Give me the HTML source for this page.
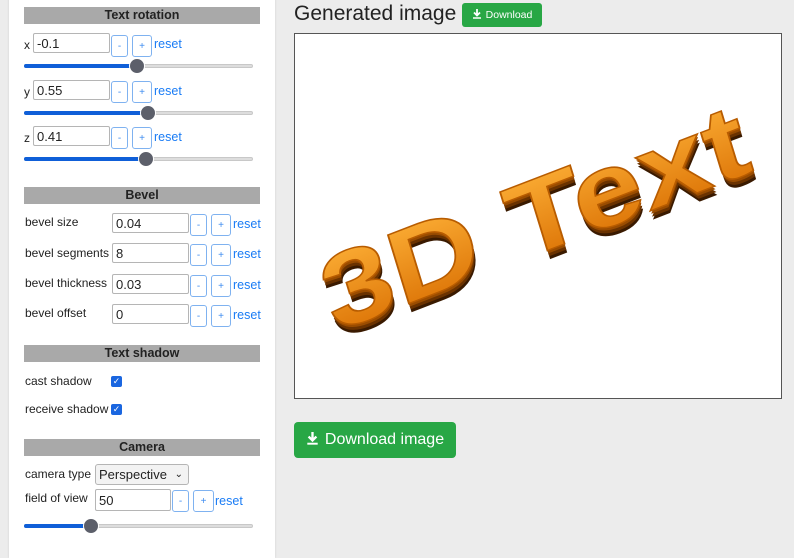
<!DOCTYPE html>
<html><head><style>
body{margin:0;width:794px;height:544px;background:#ececec;font-family:"Liberation Sans",Arial,sans-serif;position:relative;overflow:hidden;color:#222}
.p{position:absolute;left:9px;top:-2px;width:266px;height:560px;background:#fff;box-shadow:0 0 2px #ccc}
.a{position:absolute}
.h{position:absolute;left:24px;width:236px;height:17px;background:#a9a9a9;font-weight:bold;font-size:12.5px;text-align:center;line-height:17px;color:#222}
.in{position:absolute;height:20px;border:1px solid #b5b5b5;border-radius:2px;font-size:13px;line-height:20px;padding-left:3px;box-sizing:border-box;background:#fff}
.b{position:absolute;border:1px solid #7fb2f0;border-radius:3px;color:#3d8bf0;font-size:10px;text-align:center;box-sizing:border-box;height:22px;line-height:22px}
.r{position:absolute;color:#1a7cf5;font-size:12.5px}
.l{position:absolute;font-size:12px}
.tr{position:absolute;left:24px;width:229px;height:4px;background:#ddd;border-radius:2px;border:1px solid #c8c8c8;box-sizing:border-box}
.tf{position:absolute;left:24px;height:4px;background:#0f5fd8;border-radius:2px}
.th{position:absolute;width:16px;height:16px;border-radius:50%;background:#5c5f6a;border:1px solid #fff;box-sizing:border-box}
.cb{position:absolute;width:11px;height:11px;background:#1a66e0;border-radius:2px;color:#fff;font-size:9px;line-height:11px;text-align:center}
</style></head><body>
<div class="p"></div>
<div class="h" style="top:7px">Text rotation</div>

<div class="l" style="left:24px;top:38px">x</div><div class="in" style="left:33px;top:33px;width:77px">-0.1</div>
<div class="b" style="left:111px;top:35px;width:17px">-</div><div class="b" style="left:132px;top:35px;width:20px">+</div><div class="r" style="left:154px;top:37px">reset</div>
<div class="tr" style="top:64px"></div><div class="tf" style="top:64px;width:113px"></div><div class="th" style="left:129px;top:58px"></div>

<div class="l" style="left:24px;top:85px">y</div><div class="in" style="left:33px;top:80px;width:77px">0.55</div>
<div class="b" style="left:111px;top:81px;width:17px">-</div><div class="b" style="left:132px;top:81px;width:20px">+</div><div class="r" style="left:154px;top:84px">reset</div>
<div class="tr" style="top:111px"></div><div class="tf" style="top:111px;width:124px"></div><div class="th" style="left:140px;top:105px"></div>

<div class="l" style="left:24px;top:131px">z</div><div class="in" style="left:33px;top:126px;width:77px">0.41</div>
<div class="b" style="left:111px;top:127px;width:17px">-</div><div class="b" style="left:132px;top:127px;width:20px">+</div><div class="r" style="left:154px;top:130px">reset</div>
<div class="tr" style="top:157px"></div><div class="tf" style="top:157px;width:122px"></div><div class="th" style="left:138px;top:151px"></div>

<div class="h" style="top:187px">Bevel</div>
<div class="l" style="left:25px;top:215px">bevel size</div><div class="in" style="left:112px;top:213px;width:77px">0.04</div>
<div class="b" style="left:190px;top:214px;width:17px">-</div><div class="b" style="left:211px;top:214px;width:20px">+</div><div class="r" style="left:233px;top:217px">reset</div>
<div class="l" style="left:25px;top:246px">bevel segments</div><div class="in" style="left:112px;top:243px;width:77px">8</div>
<div class="b" style="left:190px;top:244px;width:17px">-</div><div class="b" style="left:211px;top:244px;width:20px">+</div><div class="r" style="left:233px;top:247px">reset</div>
<div class="l" style="left:25px;top:276px">bevel thickness</div><div class="in" style="left:112px;top:274px;width:77px">0.03</div>
<div class="b" style="left:190px;top:275px;width:17px">-</div><div class="b" style="left:211px;top:275px;width:20px">+</div><div class="r" style="left:233px;top:278px">reset</div>
<div class="l" style="left:25px;top:306px">bevel offset</div><div class="in" style="left:112px;top:304px;width:77px">0</div>
<div class="b" style="left:190px;top:305px;width:17px">-</div><div class="b" style="left:211px;top:305px;width:20px">+</div><div class="r" style="left:233px;top:308px">reset</div>

<div class="h" style="top:345px">Text shadow</div>
<div class="l" style="left:25px;top:374px">cast shadow</div><div class="cb" style="left:111px;top:376px">✓</div>
<div class="l" style="left:25px;top:402px">receive shadow</div><div class="cb" style="left:111px;top:404px">✓</div>

<div class="h" style="top:439px">Camera</div>
<div class="l" style="left:25px;top:467px">camera type</div>
<div class="in" style="left:95px;top:464px;width:94px;height:21px;background:#f3f3f3;border-radius:3px">Perspective<span style="position:absolute;right:5px;top:0;font-size:10px">⌄</span></div>
<div class="l" style="left:25px;top:491px">field of view</div><div class="in" style="left:95px;top:489px;width:76px;height:22px;line-height:22px">50</div>
<div class="b" style="left:172px;top:490px;width:17px">-</div><div class="b" style="left:193px;top:490px;width:21px">+</div><div class="r" style="left:215px;top:494px">reset</div>
<div class="tr" style="top:524px"></div><div class="tf" style="top:524px;width:67px"></div><div class="th" style="left:83px;top:518px"></div>

<div class="a" style="left:294px;top:2px;font-size:21px;color:#222">Generated image</div>
<div class="a" style="left:462px;top:3px;width:80px;height:24px;background:#28a745;border-radius:3px;color:#fff;font-size:10.5px;line-height:24px;text-align:center"><svg width="10" height="10" viewBox="0 0 10 10" style="vertical-align:-1px;margin-right:4px"><path d="M5 0V6M2 3.5L5 6.5L8 3.5" stroke="#fff" stroke-width="1.8" fill="none"/><path d="M1 9H9" stroke="#fff" stroke-width="1.5"/></svg>Download</div>
<div class="a" style="left:294px;top:33px;width:486px;height:364px;border:1px solid #555;background:#fff;overflow:hidden">
<svg width="486" height="364">
<defs><linearGradient id="g" x1="0" y1="0" x2="0" y2="1"><stop offset="0" stop-color="#ffb43a"/><stop offset="1" stop-color="#d86c00"/></linearGradient></defs>
<g transform="translate(40,298) rotate(-21) skewX(-4)" font-family="Liberation Sans,Arial,sans-serif" font-weight="bold" font-size="104">
<text x="0" y="9" fill="#3a1a00" textLength="450" lengthAdjust="spacingAndGlyphs">3D Text</text>
<text x="0" y="6" fill="#6a3200" textLength="450" lengthAdjust="spacingAndGlyphs">3D Text</text>
<text x="0" y="3" fill="#9a4c00" textLength="450" lengthAdjust="spacingAndGlyphs">3D Text</text>
<text x="0" y="0" fill="url(#g)" stroke="#b85c00" stroke-width="1.5" textLength="450" lengthAdjust="spacingAndGlyphs">3D Text</text>
</g></svg></div>
<div class="a" style="left:294px;top:422px;width:162px;height:36px;background:#28a745;border-radius:4px;color:#fff;font-size:16px;line-height:36px;text-align:center"><svg width="13" height="13" viewBox="0 0 10 10" style="vertical-align:-1px;margin-right:6px"><path d="M5 0V6M2 3.5L5 6.5L8 3.5" stroke="#fff" stroke-width="1.8" fill="none"/><path d="M1 9H9" stroke="#fff" stroke-width="1.5"/></svg>Download image</div>
</body></html>
